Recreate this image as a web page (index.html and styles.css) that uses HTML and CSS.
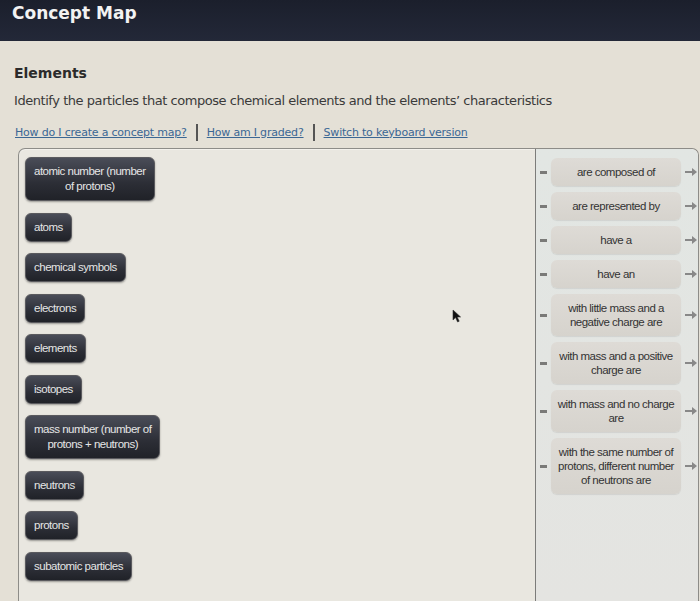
FILE: index.html
```html
<!DOCTYPE html>
<html lang="en">
<head>
  <meta charset="UTF-8" />
  <title>Concept Map</title>
  <link rel="stylesheet" href="styles.css">
</head>
<body>
  <div class="header">Concept Map</div>

  <div class="intro">
    <h2 class="title">Elements</h2>
    <p class="prompt">Identify the particles that compose chemical elements and the elements’ characteristics</p>
    <div class="help-links">
      <a href="#">How do I create a concept map?</a>
      <span class="sep"></span>
      <a href="#">How am I graded?</a>
      <span class="sep"></span>
      <a href="#">Switch to keyboard version</a>
    </div>
  </div>

  <div class="board">
    <div class="terms">
      <div class="term">atomic number (number<br>of protons)</div>
      <div class="term">atoms</div>
      <div class="term">chemical symbols</div>
      <div class="term">electrons</div>
      <div class="term">elements</div>
      <div class="term">isotopes</div>
      <div class="term">mass number (number of<br>protons + neutrons)</div>
      <div class="term">neutrons</div>
      <div class="term">protons</div>
      <div class="term">subatomic particles</div>

      <!-- mouse pointer left on the canvas -->
      <svg class="pointer" width="10" height="14" viewBox="0 0 10 14">
        <path d="M1 1 L1 11 L3.6 8.6 L5.6 13 L7.2 12.2 L5.2 8 L8.6 8 Z" fill="#111" stroke="#333" stroke-width="0.6"/>
      </svg>
    </div>

    <div class="links">
      <div class="link-row"><span class="dash"></span><div class="link">are composed of</div><span class="arrow"></span></div>
      <div class="link-row"><span class="dash"></span><div class="link">are represented by</div><span class="arrow"></span></div>
      <div class="link-row"><span class="dash"></span><div class="link">have a</div><span class="arrow"></span></div>
      <div class="link-row"><span class="dash"></span><div class="link">have an</div><span class="arrow"></span></div>
      <div class="link-row"><span class="dash"></span><div class="link">with little mass and a<br>negative charge are</div><span class="arrow"></span></div>
      <div class="link-row"><span class="dash"></span><div class="link">with mass and a positive<br>charge are</div><span class="arrow"></span></div>
      <div class="link-row"><span class="dash"></span><div class="link">with mass and no charge<br>are</div><span class="arrow"></span></div>
      <div class="link-row"><span class="dash"></span><div class="link">with the same number of<br>protons, different number<br>of neutrons are</div><span class="arrow"></span></div>
    </div>
  </div>
</body>
</html>
```

FILE: styles.css
```css
html, body {
  height: 100%;
}
body {
  margin: 0;
  font-family: "DejaVu Sans", Verdana, sans-serif;
  background: #e4e0d6;
  color: #333;
  display: flex;
  flex-direction: column;
  overflow: hidden;
}
.header {
  height: 41px;
  box-sizing: border-box;
  padding: 2px 12px 0;
  background: linear-gradient(#1b1f2c, #232838);
  color: #f2f2f2;
  font-size: 17px;
  font-weight: bold;
  line-height: 22px;
}
.intro {
  padding: 23px 14px 0;
}
.title {
  margin: 0;
  font-size: 14px;
  font-weight: bold;
  line-height: 18px;
  color: #2b2b2b;
}
.prompt {
  margin: 10px 0 0;
  font-size: 13px;
  line-height: 18px;
  color: #3a3a3a;
  letter-spacing: -0.45px;
}
.help-links {
  margin-top: 14px;
  display: flex;
  align-items: center;
  gap: 9px;
  font-size: 11px;
  line-height: 14px;
  padding-left: 1px;
}
.help-links a {
  color: #3b6794;
  text-decoration: underline;
  letter-spacing: -0.2px;
}
.sep {
  width: 2px;
  height: 17px;
  background: #555;
}

/* concept map canvas */
.board {
  flex: 1;
  margin: 7px 1px 0 18px;
  display: flex;
  border: 1px solid #8d8c88;
  border-bottom: none;
  border-radius: 7px 7px 0 0;
  background: #e9e7e0;
  overflow: hidden;
  box-shadow: inset 0 1px 0 #f3f1ec;
}
.terms {
  flex: 1;
  position: relative;
  padding: 8px 6px;
  display: flex;
  flex-direction: column;
  align-items: flex-start;
  gap: 11.5px;
}
.term {
  padding: 6px 8px;
  font-family: "Liberation Sans", Arial, sans-serif;
  font-size: 11.5px;
  line-height: 15px;
  letter-spacing: -0.5px;
  text-align: center;
  white-space: nowrap;
  color: #e6e6e6;
  background: linear-gradient(#4a4d58, #2c2e36 60%, #202228);
  border: 1px solid #5a5a5e;
  border-radius: 6px;
  box-shadow: 0 1px 2px rgba(0, 0, 0, 0.35);
}
.pointer {
  position: absolute;
  left: 433px;
  top: 160px;
}

.links {
  width: 162px;
  border-left: 1px solid #7c7c7a;
  background: linear-gradient(#e2e6e3, #e4e4e1);
  padding: 9px 0 0;
  display: flex;
  flex-direction: column;
  gap: 6px;
  border-top-right-radius: 7px;
}
.link-row {
  display: flex;
  align-items: center;
}
.dash {
  width: 7px;
  height: 3px;
  margin: 0 4px 0 4px;
  background: #7a7a78;
}
.link {
  width: 122px;
  padding: 7px 4px;
  font-family: "Liberation Sans", Arial, sans-serif;
  font-size: 11.5px;
  line-height: 14px;
  letter-spacing: -0.5px;
  text-align: center;
  white-space: nowrap;
  color: #333;
  background: linear-gradient(#dedbd6, #d6d3cd);
  border-radius: 6px;
  box-shadow: 0 1px 1px rgba(0, 0, 0, 0.08);
}
.arrow {
  position: relative;
  width: 10px;
  height: 2px;
  margin-left: 4px;
  background: #888;
}
.arrow::after {
  content: "";
  position: absolute;
  right: -2px;
  top: -3px;
  border-left: 5px solid #888;
  border-top: 4px solid transparent;
  border-bottom: 4px solid transparent;
}
```
